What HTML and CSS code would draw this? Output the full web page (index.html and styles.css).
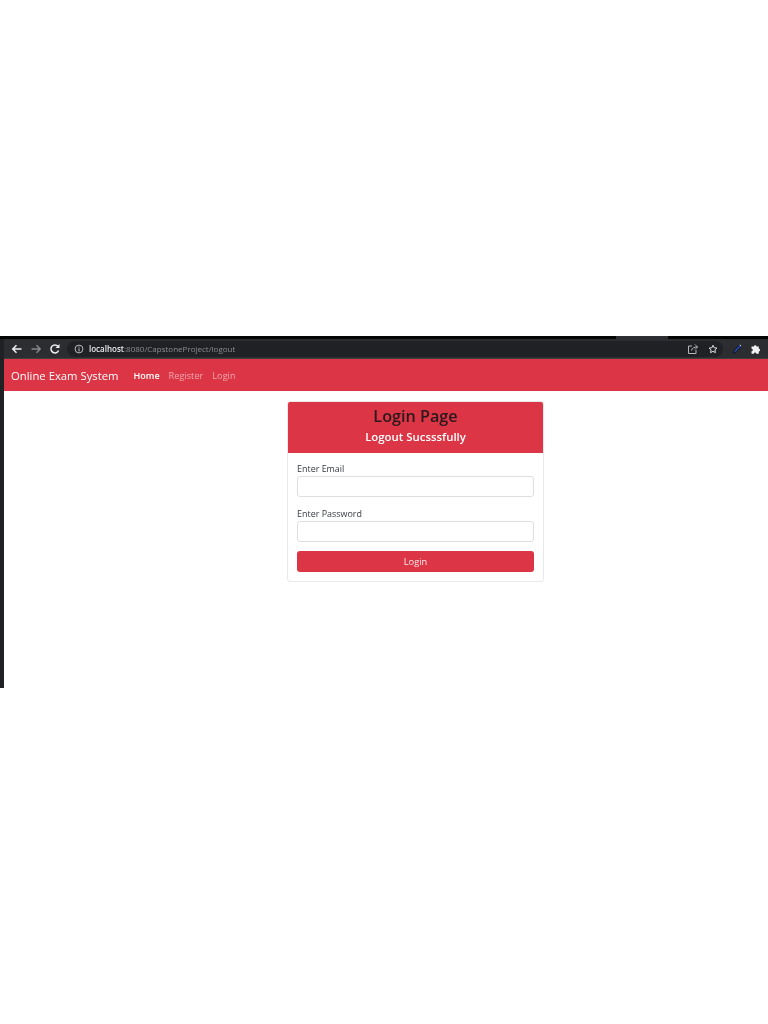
FILE: index.html
```html
<!DOCTYPE html>
<html lang="en">
<head>
<meta charset="utf-8">
<title>Login Page</title>
<link rel="stylesheet" href="styles.css">
</head>
<body>
<main class="shot">
  <div class="tabstrip"><span class="tab"></span></div>
  <div class="toolbar">
    <svg class="ico" viewBox="0 0 12 12"><path d="M10.5 6H2M5.5 2.2 1.8 6l3.7 3.8" fill="none" stroke="#eceef0" stroke-width="1.5"/></svg>
    <svg class="ico fwd" viewBox="0 0 12 12"><path d="M1.5 6H10M6.5 2.2 10.200 6 6.500 9.800" fill="none" stroke="#85878a" stroke-width="1.5"/></svg>
    <svg class="ico reload" viewBox="0 0 12 12"><path d="M9.600 7.500A4 4 0 1 1 9 3.300" fill="none" stroke="#eceef0" stroke-width="1.500"/><path d="M10.500 1v4h-4z" fill="#eceef0"/></svg>
    <div class="omnibox">
      <svg class="info" viewBox="0 0 10 10"><circle cx="5" cy="5" r="3.900" fill="none" stroke="#c8cacc" stroke-width=".9"/><path d="M5 4.400v3M5 2.600v1" stroke="#c8cacc"/></svg>
      <span class="url"><b>localhost</b>:8080/CapstoneProject/logout</span>
      <svg class="ico share" viewBox="0 0 12 12"><path d="M5 3H1.500v7.500h7.500V7M4.500 7.500C5 5 7 4 10.500 4M8 1.500 10.500 4 8 6.500" fill="none" stroke="#b5b7ba" stroke-width="1"/></svg>
      <svg class="ico star" viewBox="0 0 12 12"><path d="m6 1.500 1.400 3 3.300.4-2.400 2.200.6 3.300L6 8.800l-2.900 1.600.6-3.300-2.400-2.200 3.300-.4z" fill="none" stroke="#dcdee0" stroke-width="1.200"/></svg>
    </div>
    <svg class="ico pen" viewBox="0 0 12 12"><path d="M2.500 10.500 3 7.500 8.500 1.500l2.200 1.800L5 9.500z" fill="#24408f" stroke="#0c0d10" stroke-width=".8"/><path d="M8.800 1.800l1.400 1.200" stroke="#e7e8ea"/></svg>
    <svg class="ico puzzle" viewBox="0 0 12 12"><path d="M1.500 3.500h2.400a1.300 1.300 0 1 1 2.600 0h2.300v2.300a1.300 1.300 0 1 1 0 2.600v2.300H6.300a1.200 1.200 0 1 0-2.400 0H1.500V8.300a1.300 1.300 0 1 0 0-2.600z" fill="#f1f2f3"/></svg>
  </div>
  <nav class="navbar">
    <span class="brand">Online Exam System</span>
    <a class="nav-link active">Home</a>
    <a class="nav-link">Register</a>
    <a class="nav-link">Login</a>
  </nav>
  <div class="content">
    <section class="card">
      <header class="card-head">
        <h1>Login Page</h1>
        <h2>Logout Sucsssfully</h2>
      </header>
      <form class="card-body">
        <label class="field"><span>Enter Email</span><input type="email"></label>
        <label class="field"><span>Enter Password</span><input type="password"></label>
        <button type="button">Login</button>
      </form>
    </section>
  </div>
</main>
</body>
</html>
```
FILE: styles.css
```css
* { box-sizing: border-box; }
html, body { margin: 0; background: #fff; }
body {
  height: 1024px;
  padding-top: 336px;
  overflow: hidden;
  font-family: "Open Sans", "Noto Sans", sans-serif;
}
.shot {
  height: 352px;
  border-left: 4px solid #202124;
  display: flex;
  flex-direction: column;
  filter: blur(.3px);
}
.tabstrip {
  height: 3px;
  margin-left: -4px;
  background: #050505;
  display: flex;
  justify-content: flex-end;
  padding-right: 100px;
}
.tab { width: 52px; background: #2d2e31; }
.toolbar {
  height: 20px;
  background: #2c2d30;
  border-bottom: 1px solid #3f3f41;
  display: flex;
  align-items: center;
  padding: 0 6px 0 7px;
}
.ico { width: 12px; height: 12px; flex: none; }
.fwd { margin-left: 7px; }
.reload { margin-left: 7px; }
.omnibox {
  width: 656px;
  height: 16px;
  margin-left: 6px;
  border-radius: 8px;
  background: #202124;
  display: flex;
  align-items: center;
  padding: 0 4px 0 7px;
}
.info { width: 10px; height: 10px; flex: none; }
.url {
  flex: 1;
  margin-left: 5px;
  font-size: 8px;
  line-height: 16px;
  color: #8b8d90;
  white-space: nowrap;
}
.url b { color: #e8eaed; font-weight: 600; }
.share { margin-right: 9px; }
.star { width: 10px; height: 10px; margin-right: 1px; }
.pen { margin-left: 8px; }
.puzzle { margin-left: 7px; }
.navbar {
  height: 32px;
  background: #dc3545;
  display: flex;
  align-items: center;
  padding-left: 7px;
}
.brand { font-size: 11.300px; color: #fff; margin-right: 15px; }
.nav-link { font-size: 9.200px; padding-top: 1px; color: rgba(255, 255, 255, .55); margin-right: 9px; }
.nav-link.active { color: #fff; font-weight: 600; font-size: 9px; }
.content {
  flex: 1;
  background: #fff;
  padding: 10px 0 0 283px;
}
.card {
  width: 257px;
  height: 181px;
  border: 1px solid #e9e9ec;
  border-radius: 3px;
  overflow: hidden;
  display: flex;
  flex-direction: column;
}
.card-head {
  height: 51px;
  background: #dc3545;
  text-align: center;
  padding-top: 4px;
}
.card-head h1 {
  margin: 0;
  font-size: 16.200px;
  line-height: 20px;
  font-weight: 600;
  color: #29191c;
}
.card-head h2 {
  margin: 3px 0 0;
  font-size: 11.400px;
  line-height: 16px;
  font-weight: 600;
  color: #fff;
}
.card-body {
  padding: 9px 9px 0;
  display: flex;
  flex-direction: column;
}
.field { display: flex; flex-direction: column; margin-bottom: 9.500px; }
.field span {
  font-size: 8.950px;
  line-height: 14px;
  color: #343a40;
}
.field input {
  height: 21px;
  margin: 0;
  padding: 0;
  border: 1px solid #dedfe2;
  border-radius: 3px;
  background: #fff;
  outline: none;
}
button {
  height: 21px;
  padding: 0;
  border: 0;
  border-radius: 3px;
  background: #dc3545;
  color: #f9e9ea;
  font: 9.300px "Open Sans", "Noto Sans", sans-serif;
}
```
